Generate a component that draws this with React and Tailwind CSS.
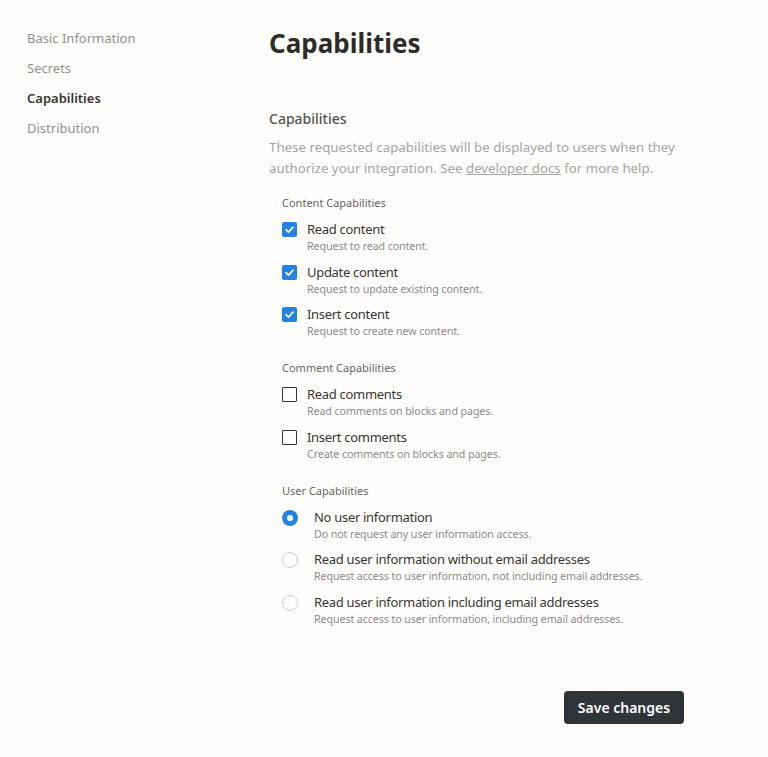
import React from "react";

function Check({ checked }) {
  return checked ? (
    <span className="flex h-[15px] w-[15px] shrink-0 items-center justify-center rounded-[2px] bg-[#2383e2]">
      <svg width="11" height="11" viewBox="0 0 12 12" fill="none">
        <path d="M2.2 6.2 L4.9 8.8 L9.9 3.4" stroke="white" strokeWidth="1.8" strokeLinecap="round" strokeLinejoin="round" />
      </svg>
    </span>
  ) : (
    <span className="block h-[15px] w-[15px] shrink-0 rounded-[1px] border-[1.5px] border-[#37352f]" />
  );
}

function Radio({ checked }) {
  return checked ? (
    <span className="flex h-4 w-4 shrink-0 items-center justify-center rounded-full bg-[#2383e2]">
      <span className="block h-[6px] w-[6px] rounded-full bg-white" />
    </span>
  ) : (
    <span className="block h-4 w-4 shrink-0 rounded-full border border-[#d3d1cb] bg-white" />
  );
}

function CheckItem({ checked, title, desc }) {
  return (
    <div className="flex items-start gap-[10px]">
      <div className="pt-[3px]">
        <Check checked={checked} />
      </div>
      <div className="flex flex-col">
        <span className="text-[13px] leading-[21px] tracking-[-0.3px] text-[#37352f]">{title}</span>
        <span className="-mt-[1px] text-[10.7px] leading-[15px] tracking-[-0.1px] text-[#8b8a86]">{desc}</span>
      </div>
    </div>
  );
}

function RadioItem({ checked, title, desc }) {
  return (
    <div className="flex items-start gap-4">
      <div className="pt-[3px]">
        <Radio checked={checked} />
      </div>
      <div className="flex flex-col">
        <span className="text-[13px] leading-[21px] tracking-[-0.3px] text-[#37352f]">{title}</span>
        <span className="-mt-[1px] text-[10.7px] leading-[15px] tracking-[-0.1px] text-[#8b8a86]">{desc}</span>
      </div>
    </div>
  );
}

export default function App() {
  return (
    <div
      className="flex min-h-[757px] w-full bg-[#fffefd] text-[#37352f]"
      style={{ fontFamily: '"Noto Sans", "Open Sans", sans-serif' }}
    >
      <nav className="flex w-[269px] shrink-0 flex-col gap-[10px] pl-[27px] pt-[28px] text-[13px] leading-[20px]">
        <span className="text-[#91908c]">Basic Information</span>
        <span className="text-[#91908c]">Secrets</span>
        <span className="font-semibold text-[#37352f]">Capabilities</span>
        <span className="text-[#91908c]">Distribution</span>
      </nav>
      <main className="flex w-[415px] flex-col pt-[24px]">
        <h1 className="text-[26px] font-bold leading-[38px] text-[#2d2c29]">Capabilities</h1>
        <h2 className="mt-[46px] text-[14px] font-medium leading-[21px] text-[#55534e]">Capabilities</h2>
        <p className="mt-[8px] text-[13.3px] leading-[21px] text-[#a5a4a0]">
          These requested capabilities will be displayed to users when they authorize your integration. See{" "}
          <a className="underline">developer docs</a> for more help.
        </p>
        <div className="mt-[16px] pl-[13px]">
          <div className="text-[11px] leading-[16px] text-[#66655f]">Content Capabilities</div>
          <div className="mt-[8px] flex flex-col gap-[7.5px]">
            <CheckItem checked title="Read content" desc="Request to read content." />
            <CheckItem checked title="Update content" desc="Request to update existing content." />
            <CheckItem checked title="Insert content" desc="Request to create new content." />
          </div>
          <div className="mt-[21px] text-[11px] leading-[16px] text-[#66655f]">Comment Capabilities</div>
          <div className="mt-[8px] flex flex-col gap-[7.5px]">
            <CheckItem title="Read comments" desc="Read comments on blocks and pages." />
            <CheckItem title="Insert comments" desc="Create comments on blocks and pages." />
          </div>
          <div className="mt-[21px] text-[11px] leading-[16px] text-[#66655f]">User Capabilities</div>
          <div className="mt-[8px] flex flex-col gap-[7.5px]">
            <RadioItem checked title="No user information" desc="Do not request any user information access." />
            <RadioItem
              title="Read user information without email addresses"
              desc="Request access to user information, not including email addresses."
            />
            <RadioItem
              title="Read user information including email addresses"
              desc="Request access to user information, including email addresses."
            />
          </div>
        </div>
        <div className="mt-[64px] flex justify-end">
          <button className="h-[33px] w-[120px] rounded-[4px] bg-[#2f3437] text-[14px] font-semibold text-white">
            Save changes
          </button>
        </div>
      </main>
    </div>
  );
}
